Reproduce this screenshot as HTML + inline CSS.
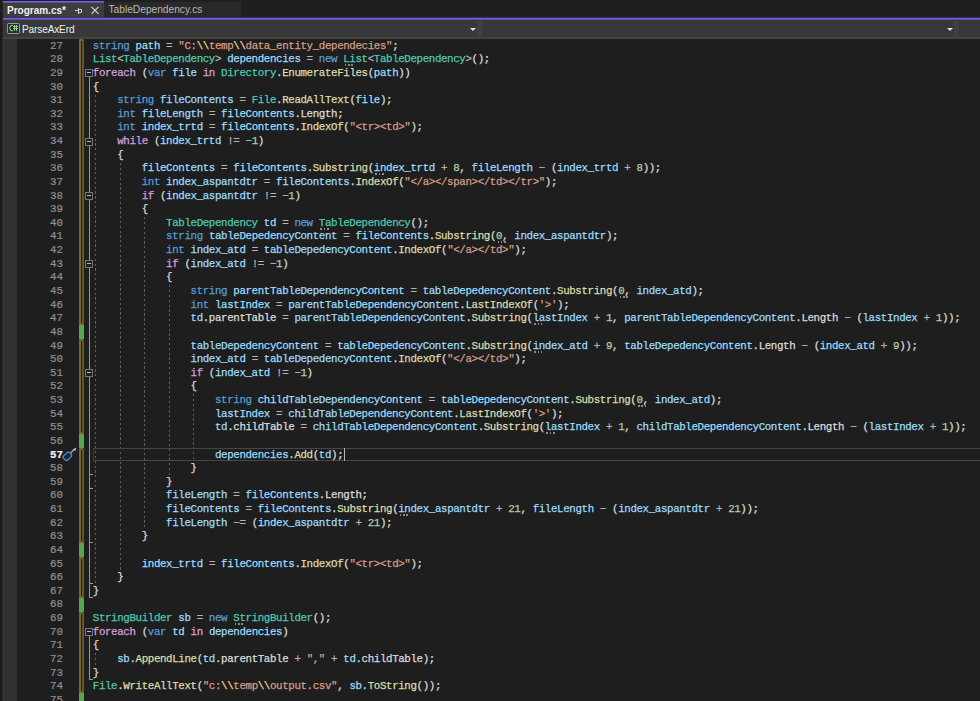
<!DOCTYPE html>
<html><head><meta charset="utf-8"><style>
html,body{margin:0;padding:0;width:980px;height:701px;overflow:hidden;background:#1e1e1e;position:relative}
*{box-sizing:border-box}
.tabs{position:absolute;left:0;top:0;width:980px;height:18px;background:#1f1f1f}
.tab1{position:absolute;left:3px;top:1px;width:101px;height:16.5px;background:linear-gradient(to bottom,#735fe6 0,#735fe6 1px,#5c50a8 1px,#5c50a8 2px,#3d3d3d 2px)}
.tab2{position:absolute;left:104px;top:2px;width:137px;height:14.5px;background:#292929}
.tt{position:absolute;font-family:"Liberation Sans",sans-serif;white-space:pre}
.pl{position:absolute;left:0;top:17px;width:980px;height:4px;background:linear-gradient(to bottom,#34305c 0,#34305c 1px,#735fe6 1px,#735fe6 2px,#5a4fa6 2px,#5a4fa6 3px,#3a3940 3px,#3a3940 4px)}
.nav{position:absolute;left:3px;top:21px;width:977px;height:16px;background:#383838}
.navb{position:absolute;left:3px;top:37px;width:977px;height:2px;background:#444}
.sep{position:absolute;top:21px;width:5px;height:17px;background:#3f3f3f}
.arr{position:absolute;width:0;height:0;border-left:3px solid transparent;border-right:3px solid transparent;border-top:3.5px solid #e0e0e0}
.lstrip{position:absolute;left:0;top:0;width:3px;height:701px;background:linear-gradient(to right,#1c1c1c 0,#1c1c1c 2px,#262626 2px,#262626 3px)}
.imargin{position:absolute;left:3px;top:39px;width:14px;height:662px;background:linear-gradient(to right,#383838 0,#383838 1px,#323232 1px)}
.l{position:absolute;left:92.8px;height:13.63px;font-family:"Liberation Mono",monospace;font-size:10.8px;line-height:13.63px;white-space:pre;color:#dcdcdc;-webkit-text-stroke:0.25px currentColor;letter-spacing:-0.3711px}
.n{position:absolute;left:30px;width:33px;text-align:right;font-family:"Liberation Mono",monospace;font-size:10.8px;line-height:13.63px;color:#909090;-webkit-text-stroke:0.2px currentColor}
.n.cur{color:#f2f2f2;font-weight:bold}
.yb{position:absolute;left:79px;width:5px;border:2px solid #79672a;border-right-color:#62562e;border-radius:1.5px 1.5px 1px 1px}
.gb{position:absolute;left:79px;width:5px;background:#57a64a}
.ig{position:absolute;width:1px;background:repeating-linear-gradient(to bottom,transparent 0,transparent 1.3px,#606060 1.2px,#606060 3.5px,transparent 3.5px,transparent 4.81px)}
.fl{position:absolute;left:89px;width:1px;background:#999}
.fb{position:absolute;left:85px;width:8px;height:8px;border:1px solid #777;background:#1e1e1e}
.fb:after{content:"";position:absolute;left:1px;top:2px;width:4px;height:1px;background:#bbb}
.tk{position:absolute;left:89px;width:4px;height:1px;background:#999}
.dt{position:absolute;width:1.5px;height:1.5px;background:#8a8a8a}
.cl{position:absolute;left:93px;top:448px;width:890px;height:13px;border:1px solid #464646;border-left-color:#3a3a3a;border-right:none}
</style></head><body>
<div class="tabs"></div>
<div class="tab1"></div>
<div class="tt" style="left:7px;top:5.2px;font-size:10px;font-weight:bold;color:#f0f0f0">Program.cs*</div>
<svg style="position:absolute;left:74px;top:6px" width="10" height="10" viewBox="0 0 10 10"><path d="M0.8 4.5H4M4.5 2V8M4.5 3.5H7.5V6.5H4.5" fill="none" stroke="#d0d0d0" stroke-width="1"/></svg>
<svg style="position:absolute;left:90px;top:6px" width="10" height="9" viewBox="0 0 10 9"><path d="M1.5 0.8L8.5 7.8M8.5 0.8L1.5 7.8" fill="none" stroke="#d8d8d8" stroke-width="1.1"/></svg>
<div class="tab2"></div>
<div class="tt" style="left:108.5px;top:3.6px;font-size:10.2px;color:#b8b8b8">TableDependency.cs</div>
<div class="pl"></div>
<div class="nav"></div>
<div class="navb"></div>
<div class="sep" style="left:477px"></div>
<div class="sep" style="left:954px"></div>
<div class="arr" style="left:470px;top:28px"></div>
<div class="arr" style="left:947px;top:28px"></div>
<div class="tt" style="left:22px;top:23px;font-size:11.2px;color:#f0f0f0;transform-origin:0 0;transform:scaleX(0.9);letter-spacing:-0.15px">ParseAxErd</div>
<svg style="position:absolute;left:7px;top:23px" width="13" height="11" viewBox="0 0 13 11"><rect x="0.5" y="0.5" width="12" height="10" rx="1" fill="#2b2b2b" stroke="#9a9a9a" stroke-width="1"/><path d="M5.9 2.6A2.3 2.7 0 1 0 5.9 7.6" fill="none" stroke="#7fd07f" stroke-width="1.1"/><path d="M7.5 2V8M9.5 2V8M6 3.5H11M6 5.5H11" fill="none" stroke="#86d986" stroke-width="1"/></svg>
<div class="lstrip"></div>
<div class="imargin"></div>
<div class="n" style="top:40px">27</div>
<div class="n" style="top:53px">28</div>
<div class="n" style="top:67px">29</div>
<div class="n" style="top:81px">30</div>
<div class="n" style="top:94px">31</div>
<div class="n" style="top:108px">32</div>
<div class="n" style="top:121px">33</div>
<div class="n" style="top:135px">34</div>
<div class="n" style="top:149px">35</div>
<div class="n" style="top:162px">36</div>
<div class="n" style="top:176px">37</div>
<div class="n" style="top:190px">38</div>
<div class="n" style="top:203px">39</div>
<div class="n" style="top:217px">40</div>
<div class="n" style="top:230px">41</div>
<div class="n" style="top:244px">42</div>
<div class="n" style="top:258px">43</div>
<div class="n" style="top:271px">44</div>
<div class="n" style="top:285px">45</div>
<div class="n" style="top:299px">46</div>
<div class="n" style="top:312px">47</div>
<div class="n" style="top:326px">48</div>
<div class="n" style="top:340px">49</div>
<div class="n" style="top:353px">50</div>
<div class="n" style="top:367px">51</div>
<div class="n" style="top:380px">52</div>
<div class="n" style="top:394px">53</div>
<div class="n" style="top:408px">54</div>
<div class="n" style="top:421px">55</div>
<div class="n" style="top:435px">56</div>
<div class="n cur" style="top:449px">57</div>
<div class="n" style="top:462px">58</div>
<div class="n" style="top:476px">59</div>
<div class="n" style="top:489px">60</div>
<div class="n" style="top:503px">61</div>
<div class="n" style="top:517px">62</div>
<div class="n" style="top:530px">63</div>
<div class="n" style="top:544px">64</div>
<div class="n" style="top:558px">65</div>
<div class="n" style="top:571px">66</div>
<div class="n" style="top:585px">67</div>
<div class="n" style="top:598px">68</div>
<div class="n" style="top:612px">69</div>
<div class="n" style="top:626px">70</div>
<div class="n" style="top:639px">71</div>
<div class="n" style="top:653px">72</div>
<div class="n" style="top:667px">73</div>
<div class="n" style="top:680px">74</div>
<div class="n" style="top:694px">75</div>
<div class="yb" style="top:39.10px;height:286.23px"></div>
<div class="gb" style="top:325.33px;height:13.63px"></div>
<div class="yb" style="top:338.96px;height:95.41px"></div>
<div class="gb" style="top:434.37px;height:13.63px"></div>
<div class="yb" style="top:448.00px;height:95.41px"></div>
<div class="gb" style="top:543.41px;height:13.63px"></div>
<div class="yb" style="top:557.04px;height:40.89px"></div>
<div class="gb" style="top:597.93px;height:13.63px"></div>
<div class="yb" style="top:611.56px;height:81.78px"></div>
<div class="gb" style="top:693.34px;height:13.63px"></div>
<div class="fl" style="top:77px;height:520.43px"></div>
<div class="fl" style="top:636.19px;height:43.32px"></div>
<div class="tk" style="top:474.06px"></div><div class="tk" style="top:487.69px"></div><div class="tk" style="top:542.21px"></div><div class="tk" style="top:583.10px"></div><div class="tk" style="top:596.73px"></div><div class="tk" style="top:678.51px"></div>
<div class="fb" style="top:69.36px"></div>
<div class="fb" style="top:137.51px"></div>
<div class="fb" style="top:192.03px"></div>
<div class="fb" style="top:260.18px"></div>
<div class="fb" style="top:369.22px"></div>
<div class="fb" style="top:628.19px"></div>
<div class="ig" style="left:95.00px;top:93.62px;height:490.68px"></div>
<div class="ig" style="left:120.00px;top:161.77px;height:408.90px"></div>
<div class="ig" style="left:144.00px;top:216.29px;height:313.49px"></div>
<div class="ig" style="left:169.00px;top:284.44px;height:190.82px"></div>
<div class="ig" style="left:193.00px;top:393.48px;height:68.15px"></div>
<div class="ig" style="left:95.00px;top:652.45px;height:13.63px"></div>
<div class="cl"></div>
<div style="position:absolute;left:344px;top:448px;width:1px;height:13px;background:#b4b4b4"></div>
<svg style="position:absolute;left:58px;top:444px" width="24" height="20" viewBox="0 0 24 20"><path d="M12.6 9L16.2 5.4" stroke="#a0a0a0" stroke-width="1.5"/><path d="M15 5.2L18.6 3.6L17.2 7Z" fill="#c0c0c0"/><rect x="5.2" y="9.4" width="8.4" height="5.8" rx="2.2" transform="rotate(-42 9.4 12.3)" fill="#1e2630" stroke="#4a8ed6" stroke-width="1.3"/></svg>
<div class="l" style="top:40px"><span style="color:#569cd6">string</span> <span style="color:#9cdcfe">path</span> <span style="color:#b4b4b4">=</span> <span style="color:#d69d85">&quot;C:</span><span style="color:#ffd68f">\\</span><span style="color:#d69d85">temp</span><span style="color:#ffd68f">\\</span><span style="color:#d69d85">data_entity_dependecies&quot;</span>;</div>
<div class="l" style="top:53px"><span style="color:#4ec9b0">List</span><span style="color:#b4b4b4">&lt;</span><span style="color:#4ec9b0">TableDependency</span><span style="color:#b4b4b4">&gt;</span> <span style="color:#9cdcfe">dependencies</span> <span style="color:#b4b4b4">=</span> <span style="color:#569cd6">new</span> <span style="color:#4ec9b0">List</span><span style="color:#b4b4b4">&lt;</span><span style="color:#4ec9b0">TableDependency</span><span style="color:#b4b4b4">&gt;</span>();</div>
<div class="l" style="top:67px"><span style="color:#d8a0df">foreach</span> (<span style="color:#569cd6">var</span> <span style="color:#9cdcfe">file</span> <span style="color:#d8a0df">in</span> <span style="color:#4ec9b0">Directory</span>.<span style="color:#dcdcaa">EnumerateFiles</span>(<span style="color:#9cdcfe">path</span>))</div>
<div class="l" style="top:81px">{</div>
<div class="l" style="top:94px">    <span style="color:#569cd6">string</span> <span style="color:#9cdcfe">fileContents</span> <span style="color:#b4b4b4">=</span> <span style="color:#4ec9b0">File</span>.<span style="color:#dcdcaa">ReadAllText</span>(<span style="color:#9cdcfe">file</span>);</div>
<div class="l" style="top:108px">    <span style="color:#569cd6">int</span> <span style="color:#9cdcfe">fileLength</span> <span style="color:#b4b4b4">=</span> <span style="color:#9cdcfe">fileContents</span>.<span style="color:#dcdcdc">Length</span>;</div>
<div class="l" style="top:121px">    <span style="color:#569cd6">int</span> <span style="color:#9cdcfe">index_trtd</span> <span style="color:#b4b4b4">=</span> <span style="color:#9cdcfe">fileContents</span>.<span style="color:#dcdcaa">IndexOf</span>(<span style="color:#d69d85">&quot;&lt;tr&gt;&lt;td&gt;&quot;</span>);</div>
<div class="l" style="top:135px">    <span style="color:#d8a0df">while</span> (<span style="color:#9cdcfe">index_trtd</span> <span style="color:#b4b4b4">!</span><span style="color:#b4b4b4">=</span> <span style="color:#b4b4b4">−</span><span style="color:#b5cea8">1</span>)</div>
<div class="l" style="top:149px">    {</div>
<div class="l" style="top:162px">        <span style="color:#9cdcfe">fileContents</span> <span style="color:#b4b4b4">=</span> <span style="color:#9cdcfe">fileContents</span>.<span style="color:#dcdcaa">Substring</span>(<span style="color:#9cdcfe">index_trtd</span> <span style="color:#b4b4b4">+</span> <span style="color:#b5cea8">8</span>, <span style="color:#9cdcfe">fileLength</span> <span style="color:#b4b4b4">−</span> (<span style="color:#9cdcfe">index_trtd</span> <span style="color:#b4b4b4">+</span> <span style="color:#b5cea8">8</span>));</div>
<div class="l" style="top:176px">        <span style="color:#569cd6">int</span> <span style="color:#9cdcfe">index_aspantdtr</span> <span style="color:#b4b4b4">=</span> <span style="color:#9cdcfe">fileContents</span>.<span style="color:#dcdcaa">IndexOf</span>(<span style="color:#d69d85">&quot;&lt;/a&gt;&lt;/span&gt;&lt;/td&gt;&lt;/tr&gt;&quot;</span>);</div>
<div class="l" style="top:190px">        <span style="color:#d8a0df">if</span> (<span style="color:#9cdcfe">index_aspantdtr</span> <span style="color:#b4b4b4">!</span><span style="color:#b4b4b4">=</span> <span style="color:#b4b4b4">−</span><span style="color:#b5cea8">1</span>)</div>
<div class="l" style="top:203px">        {</div>
<div class="l" style="top:217px">            <span style="color:#4ec9b0">TableDependency</span> <span style="color:#9cdcfe">td</span> <span style="color:#b4b4b4">=</span> <span style="color:#569cd6">new</span> <span style="color:#4ec9b0">TableDependency</span>();</div>
<div class="l" style="top:230px">            <span style="color:#569cd6">string</span> <span style="color:#9cdcfe">tableDepedencyContent</span> <span style="color:#b4b4b4">=</span> <span style="color:#9cdcfe">fileContents</span>.<span style="color:#dcdcaa">Substring</span>(<span style="color:#b5cea8">0</span>, <span style="color:#9cdcfe">index_aspantdtr</span>);</div>
<div class="l" style="top:244px">            <span style="color:#569cd6">int</span> <span style="color:#9cdcfe">index_atd</span> <span style="color:#b4b4b4">=</span> <span style="color:#9cdcfe">tableDepedencyContent</span>.<span style="color:#dcdcaa">IndexOf</span>(<span style="color:#d69d85">&quot;&lt;/a&gt;&lt;/td&gt;&quot;</span>);</div>
<div class="l" style="top:258px">            <span style="color:#d8a0df">if</span> (<span style="color:#9cdcfe">index_atd</span> <span style="color:#b4b4b4">!</span><span style="color:#b4b4b4">=</span> <span style="color:#b4b4b4">−</span><span style="color:#b5cea8">1</span>)</div>
<div class="l" style="top:271px">            {</div>
<div class="l" style="top:285px">                <span style="color:#569cd6">string</span> <span style="color:#9cdcfe">parentTableDependencyContent</span> <span style="color:#b4b4b4">=</span> <span style="color:#9cdcfe">tableDepedencyContent</span>.<span style="color:#dcdcaa">Substring</span>(<span style="color:#b5cea8">0</span>, <span style="color:#9cdcfe">index_atd</span>);</div>
<div class="l" style="top:299px">                <span style="color:#569cd6">int</span> <span style="color:#9cdcfe">lastIndex</span> <span style="color:#b4b4b4">=</span> <span style="color:#9cdcfe">parentTableDependencyContent</span>.<span style="color:#dcdcaa">LastIndexOf</span>(<span style="color:#d69d85">&#x27;&gt;&#x27;</span>);</div>
<div class="l" style="top:312px">                <span style="color:#9cdcfe">td</span>.<span style="color:#dcdcdc">parentTable</span> <span style="color:#b4b4b4">=</span> <span style="color:#9cdcfe">parentTableDependencyContent</span>.<span style="color:#dcdcaa">Substring</span>(<span style="color:#9cdcfe">lastIndex</span> <span style="color:#b4b4b4">+</span> <span style="color:#b5cea8">1</span>, <span style="color:#9cdcfe">parentTableDependencyContent</span>.<span style="color:#dcdcdc">Length</span> <span style="color:#b4b4b4">−</span> (<span style="color:#9cdcfe">lastIndex</span> <span style="color:#b4b4b4">+</span> <span style="color:#b5cea8">1</span>));</div>
<div class="l" style="top:326px"></div>
<div class="l" style="top:340px">                <span style="color:#9cdcfe">tableDepedencyContent</span> <span style="color:#b4b4b4">=</span> <span style="color:#9cdcfe">tableDepedencyContent</span>.<span style="color:#dcdcaa">Substring</span>(<span style="color:#9cdcfe">index_atd</span> <span style="color:#b4b4b4">+</span> <span style="color:#b5cea8">9</span>, <span style="color:#9cdcfe">tableDepedencyContent</span>.<span style="color:#dcdcdc">Length</span> <span style="color:#b4b4b4">−</span> (<span style="color:#9cdcfe">index_atd</span> <span style="color:#b4b4b4">+</span> <span style="color:#b5cea8">9</span>));</div>
<div class="l" style="top:353px">                <span style="color:#9cdcfe">index_atd</span> <span style="color:#b4b4b4">=</span> <span style="color:#9cdcfe">tableDepedencyContent</span>.<span style="color:#dcdcaa">IndexOf</span>(<span style="color:#d69d85">&quot;&lt;/a&gt;&lt;/td&gt;&quot;</span>);</div>
<div class="l" style="top:367px">                <span style="color:#d8a0df">if</span> (<span style="color:#9cdcfe">index_atd</span> <span style="color:#b4b4b4">!</span><span style="color:#b4b4b4">=</span> <span style="color:#b4b4b4">−</span><span style="color:#b5cea8">1</span>)</div>
<div class="l" style="top:380px">                {</div>
<div class="l" style="top:394px">                    <span style="color:#569cd6">string</span> <span style="color:#9cdcfe">childTableDependencyContent</span> <span style="color:#b4b4b4">=</span> <span style="color:#9cdcfe">tableDepedencyContent</span>.<span style="color:#dcdcaa">Substring</span>(<span style="color:#b5cea8">0</span>, <span style="color:#9cdcfe">index_atd</span>);</div>
<div class="l" style="top:408px">                    <span style="color:#9cdcfe">lastIndex</span> <span style="color:#b4b4b4">=</span> <span style="color:#9cdcfe">childTableDependencyContent</span>.<span style="color:#dcdcaa">LastIndexOf</span>(<span style="color:#d69d85">&#x27;&gt;&#x27;</span>);</div>
<div class="l" style="top:421px">                    <span style="color:#9cdcfe">td</span>.<span style="color:#dcdcdc">childTable</span> <span style="color:#b4b4b4">=</span> <span style="color:#9cdcfe">childTableDependencyContent</span>.<span style="color:#dcdcaa">Substring</span>(<span style="color:#9cdcfe">lastIndex</span> <span style="color:#b4b4b4">+</span> <span style="color:#b5cea8">1</span>, <span style="color:#9cdcfe">childTableDependencyContent</span>.<span style="color:#dcdcdc">Length</span> <span style="color:#b4b4b4">−</span> (<span style="color:#9cdcfe">lastIndex</span> <span style="color:#b4b4b4">+</span> <span style="color:#b5cea8">1</span>));</div>
<div class="l" style="top:435px"></div>
<div class="l" style="top:449px">                    <span style="color:#9cdcfe">dependencies</span>.<span style="color:#dcdcaa">Add</span>(<span style="color:#9cdcfe">td</span>);</div>
<div class="l" style="top:462px">                }</div>
<div class="l" style="top:476px">            }</div>
<div class="l" style="top:489px">            <span style="color:#9cdcfe">fileLength</span> <span style="color:#b4b4b4">=</span> <span style="color:#9cdcfe">fileContents</span>.<span style="color:#dcdcdc">Length</span>;</div>
<div class="l" style="top:503px">            <span style="color:#9cdcfe">fileContents</span> <span style="color:#b4b4b4">=</span> <span style="color:#9cdcfe">fileContents</span>.<span style="color:#dcdcaa">Substring</span>(<span style="color:#9cdcfe">index_aspantdtr</span> <span style="color:#b4b4b4">+</span> <span style="color:#b5cea8">21</span>, <span style="color:#9cdcfe">fileLength</span> <span style="color:#b4b4b4">−</span> (<span style="color:#9cdcfe">index_aspantdtr</span> <span style="color:#b4b4b4">+</span> <span style="color:#b5cea8">21</span>));</div>
<div class="l" style="top:517px">            <span style="color:#9cdcfe">fileLength</span> <span style="color:#b4b4b4">−</span><span style="color:#b4b4b4">=</span> (<span style="color:#9cdcfe">index_aspantdtr</span> <span style="color:#b4b4b4">+</span> <span style="color:#b5cea8">21</span>);</div>
<div class="l" style="top:530px">        }</div>
<div class="l" style="top:544px"></div>
<div class="l" style="top:558px">        <span style="color:#9cdcfe">index_trtd</span> <span style="color:#b4b4b4">=</span> <span style="color:#9cdcfe">fileContents</span>.<span style="color:#dcdcaa">IndexOf</span>(<span style="color:#d69d85">&quot;&lt;tr&gt;&lt;td&gt;&quot;</span>);</div>
<div class="l" style="top:571px">    }</div>
<div class="l" style="top:585px">}</div>
<div class="l" style="top:598px"></div>
<div class="l" style="top:612px"><span style="color:#4ec9b0">StringBuilder</span> <span style="color:#9cdcfe">sb</span> <span style="color:#b4b4b4">=</span> <span style="color:#569cd6">new</span> <span style="color:#4ec9b0">StringBuilder</span>();</div>
<div class="l" style="top:626px"><span style="color:#d8a0df">foreach</span> (<span style="color:#569cd6">var</span> <span style="color:#9cdcfe">td</span> <span style="color:#d8a0df">in</span> <span style="color:#9cdcfe">dependencies</span>)</div>
<div class="l" style="top:639px">{</div>
<div class="l" style="top:653px">    <span style="color:#9cdcfe">sb</span>.<span style="color:#dcdcaa">AppendLine</span>(<span style="color:#9cdcfe">td</span>.<span style="color:#dcdcdc">parentTable</span> <span style="color:#b4b4b4">+</span> <span style="color:#d69d85">&quot;,&quot;</span> <span style="color:#b4b4b4">+</span> <span style="color:#9cdcfe">td</span>.<span style="color:#dcdcdc">childTable</span>);</div>
<div class="l" style="top:667px">}</div>
<div class="l" style="top:680px"><span style="color:#4ec9b0">File</span>.<span style="color:#dcdcaa">WriteAllText</span>(<span style="color:#d69d85">&quot;c:</span><span style="color:#ffd68f">\\</span><span style="color:#d69d85">temp</span><span style="color:#ffd68f">\\</span><span style="color:#d69d85">output.csv&quot;</span>, <span style="color:#9cdcfe">sb</span>.<span style="color:#dcdcaa">ToString</span>());</div>
<div class="l" style="top:694px"></div>
<div class="dt" style="left:344.8px;top:64.3px"></div><div class="dt" style="left:348.1px;top:64.3px"></div><div class="dt" style="left:351.4px;top:64.3px"></div><div class="dt" style="left:375.4px;top:173.3px"></div><div class="dt" style="left:378.7px;top:173.3px"></div><div class="dt" style="left:382.0px;top:173.3px"></div><div class="dt" style="left:320.4px;top:228.3px"></div><div class="dt" style="left:323.7px;top:228.3px"></div><div class="dt" style="left:327.0px;top:228.3px"></div><div class="dt" style="left:497.6px;top:241.3px"></div><div class="dt" style="left:500.9px;top:241.3px"></div><div class="dt" style="left:504.2px;top:241.3px"></div><div class="dt" style="left:619.8px;top:296.3px"></div><div class="dt" style="left:623.1px;top:296.3px"></div><div class="dt" style="left:626.4px;top:296.3px"></div><div class="dt" style="left:534.2px;top:323.3px"></div><div class="dt" style="left:537.5px;top:323.3px"></div><div class="dt" style="left:540.8px;top:323.3px"></div><div class="dt" style="left:534.2px;top:351.3px"></div><div class="dt" style="left:537.5px;top:351.3px"></div><div class="dt" style="left:540.8px;top:351.3px"></div><div class="dt" style="left:638.1px;top:405.3px"></div><div class="dt" style="left:641.4px;top:405.3px"></div><div class="dt" style="left:644.7px;top:405.3px"></div><div class="dt" style="left:546.4px;top:432.3px"></div><div class="dt" style="left:549.7px;top:432.3px"></div><div class="dt" style="left:553.0px;top:432.3px"></div><div class="dt" style="left:399.8px;top:514.3px"></div><div class="dt" style="left:403.1px;top:514.3px"></div><div class="dt" style="left:406.4px;top:514.3px"></div><div class="dt" style="left:234.8px;top:623.3px"></div><div class="dt" style="left:238.1px;top:623.3px"></div><div class="dt" style="left:241.4px;top:623.3px"></div>
</body></html>
